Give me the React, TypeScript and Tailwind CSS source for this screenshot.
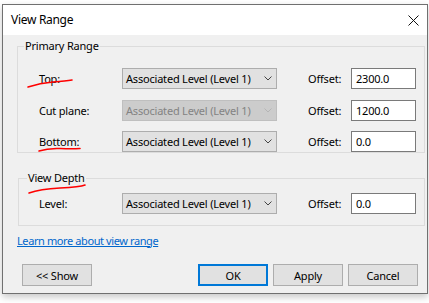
import React from "react";

const font = { fontFamily: '"Noto Sans", "Open Sans", sans-serif' };

function Chevron({ disabled }: { disabled?: boolean }) {
  return (
    <svg width="8" height="5" viewBox="0 0 8 5" className="shrink-0">
      <polyline
        points="0.5,0.5 4,4 7.5,0.5"
        fill="none"
        stroke={disabled ? "#b5b5b5" : "#444"}
        strokeWidth="1"
      />
    </svg>
  );
}

function Select({ disabled }: { disabled?: boolean }) {
  return (
    <div
      className={
        "w-[155px] h-[21px] border flex items-center justify-between pl-[3px] pr-[4px] " +
        (disabled
          ? "bg-[#cccccc] border-[#bfbfbf] text-[#838383]"
          : "bg-[#e1e1e1] border-[#adadad] text-black")
      }
    >
      <span className="text-[11px] leading-[15px] tracking-[-0.2px] whitespace-nowrap">
        Associated Level (Level 1)
      </span>
      <Chevron disabled={disabled} />
    </div>
  );
}

function Row({
  label,
  value,
  disabled,
  className,
}: {
  label: string;
  value: string;
  disabled?: boolean;
  className?: string;
}) {
  return (
    <div className={"flex items-center h-[21px] " + (className ?? "")}>
      <div className="w-[83px] text-[11px] leading-[15px] tracking-[-0.2px] whitespace-nowrap">
        {label}
      </div>
      <Select disabled={disabled} />
      <div className="ml-[31px] w-[43px] text-[11px] leading-[15px] tracking-[-0.2px] whitespace-nowrap">
        Offset:
      </div>
      <div className="w-[65px] h-[21px] bg-white border border-[#7a7a7a] flex items-center pl-[4px] text-[11px] leading-[15px] tracking-[-0.2px]">
        {value}
      </div>
    </div>
  );
}

function Button({ label, primary }: { label: string; primary?: boolean }) {
  return (
    <div
      className={
        "w-[70px] h-[22px] bg-[#e1e1e1] flex items-center justify-center text-[11px] leading-[15px] tracking-[-0.2px] " +
        (primary ? "border-2 border-[#0078d7]" : "border border-[#adadad]")
      }
    >
      {label}
    </div>
  );
}

export default function App() {
  return (
    <div className="relative w-[429px] h-[303px] bg-white overflow-hidden text-black" style={font}>
      <div className="ml-[2px] mt-[4px] w-[426px] border border-[#707070] shadow-[0_3px_7px_rgba(0,0,0,0.22)]">
        {/* title bar */}
        <div className="h-[30px] bg-white flex items-center justify-between pl-[8px] pr-[8px]">
          <span className="text-[12px] leading-[16px] tracking-[-0.3px]">View Range</span>
          <svg width="11" height="11" viewBox="0 0 11 11">
            <path d="M0.5 0.5 L10.5 10.5 M10.5 0.5 L0.5 10.5" stroke="#111" strokeWidth="1" fill="none" />
          </svg>
        </div>
        {/* body */}
        <div className="bg-[#f0f0f0] h-[258px] flex flex-col">
          {/* Primary Range */}
          <div className="relative mt-[11px] ml-[14px] w-[408px] h-[107px] border border-[#dcdcdc] pl-[21px] pt-[21px]">
            <span className="absolute top-[-9px] left-[6px] px-[1px] bg-[#f0f0f0] text-[11px] leading-[15px] tracking-[-0.2px] whitespace-nowrap">
              Primary Range
            </span>
            <Row label="Top:" value="2300.0" />
            <Row label="Cut plane:" value="1200.0" disabled className="mt-[11px]" />
            <Row label="Bottom:" value="0.0" className="mt-[10px]" />
          </div>
          {/* View Depth */}
          <div className="relative mt-[25px] ml-[15px] w-[407px] h-[48px] border border-[#dcdcdc] pl-[20px] pt-[14px]">
            <span className="absolute top-[-9px] left-[8px] px-[1px] bg-[#f0f0f0] text-[11px] leading-[15px] tracking-[-0.2px] whitespace-nowrap">
              View Depth
            </span>
            <Row label="Level:" value="0.0" />
          </div>
          <div className="mt-[6px] ml-[14px] h-[16px] flex items-center">
            <span className="text-[11px] leading-[15px] tracking-[-0.4px] text-[#0066cc] underline">
              Learn more about view range
            </span>
          </div>
          <div className="mt-[16px] flex items-center justify-between pl-[19px] pr-[9px]">
            <Button label="<< Show" />
            <div className="flex gap-[5px]">
              <Button label="OK" primary />
              <Button label="Apply" />
              <Button label="Cancel" />
            </div>
          </div>
        </div>
      </div>
      {/* red hand-drawn annotations */}
      <svg className="absolute left-0 top-0 pointer-events-none" width="429" height="303" viewBox="0 0 429 303">
        <path d="M28 87 Q 40 83 53 82 T 72 80" stroke="#f00" strokeWidth="1.6" fill="none" strokeLinecap="round" />
        <path d="M39 151 Q 48 148 60 148.5 T 80 148.5" stroke="#f00" strokeWidth="1.6" fill="none" strokeLinecap="round" />
        <path d="M29 193 Q 40 189 60 188 T 85 185" stroke="#f00" strokeWidth="1.6" fill="none" strokeLinecap="round" />
      </svg>
    </div>
  );
}
